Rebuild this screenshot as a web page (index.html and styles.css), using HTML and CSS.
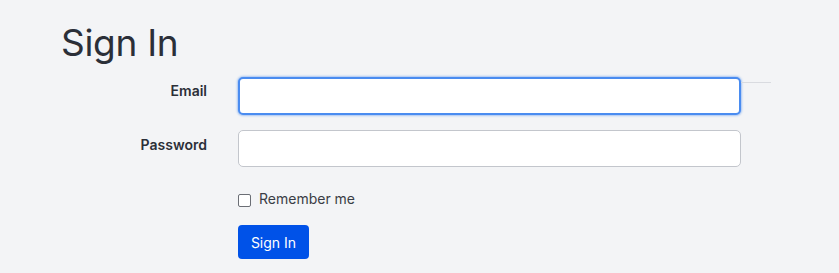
FILE: index.html
```html
<!DOCTYPE html>
<html>
<head>
<meta charset="utf-8">
<link rel="stylesheet" href="styles.css">
</head>
<body>
<main class="page">
  <h1 class="title">Sign In</h1>
  <form class="form">
    <div class="row">
      <label class="label" for="email">Email</label>
      <div class="field">
        <input class="input input-focus" id="email" type="email">
        <span class="rule"></span>
      </div>
    </div>
    <div class="row">
      <label class="label label-pw" for="password">Password</label>
      <div class="field">
        <input class="input" id="password" type="password">
      </div>
    </div>
    <div class="row row-check">
      <span class="spacer"></span>
      <label class="check"><span class="box"></span><span>Remember me</span></label>
    </div>
    <div class="row row-btn">
      <span class="spacer"></span>
      <button class="btn" type="button">Sign In</button>
    </div>
  </form>
</main>
</body>
</html>
```
FILE: styles.css
```css
html, body {
  margin: 0;
  padding: 0;
  background: #f3f4f6;
  font-family: Inter, "Noto Sans", sans-serif;
  color: #2b2f38;
}
.page {
  padding: 20px 0 0 61px;
}
.title {
  margin: 0;
  font-size: 37px;
  font-weight: 400;
  line-height: 46px;
  letter-spacing: -0.3px;
  color: #2b2f38;
}
.form {
  margin-top: 11px;
  display: flex;
  flex-direction: column;
}
.row {
  display: grid;
  grid-template-columns: 146px 1fr;
  column-gap: 31px;
  align-items: start;
}
.row + .row { margin-top: 15px; }
.label {
  text-align: right;
  font-size: 14px;
  line-height: 17px;
  font-weight: 600;
  color: #2b2f38;
  padding-top: 5px;
}
.label-pw { padding-top: 6px; }
.field {
  display: flex;
  align-items: flex-start;
}
.input {
  box-sizing: border-box;
  width: 503px;
  height: 37px;
  margin: 0;
  border: 1px solid #c3c6cc;
  border-radius: 5px;
  background: #fff;
  outline: none;
}
.input-focus {
  height: 38px;
  border: 2px solid #4a8cf0;
  box-shadow: 0 0 2px 1px rgba(74, 140, 240, 0.45);
}
.rule {
  width: 30px;
  margin-top: 5px;
  border-top: 1px solid #d9dbe0;
}
.row-check { margin-top: 23px !important; align-items: center; }
.check {
  display: flex;
  align-items: center;
  gap: 8px;
  font-size: 14px;
  line-height: 17px;
  color: #3a3d45;
}
.box {
  box-sizing: border-box;
  width: 13px;
  height: 13px;
  border: 1px solid #6b6e75;
  border-radius: 2px;
  background: #fff;
  margin-top: 3px;
}
.row-btn { margin-top: 18px !important; }
.btn {
  justify-self: start;
  width: 71px;
  height: 34px;
  border: 0;
  border-radius: 4px;
  background: #0052e8;
  color: #fff;
  font-family: Inter, "Noto Sans", sans-serif;
  font-size: 14px;
  padding: 0;
}
```
